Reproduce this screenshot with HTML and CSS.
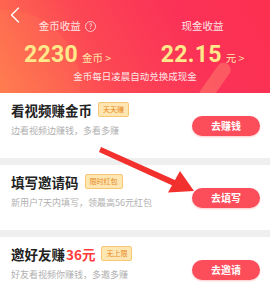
FILE: index.html
```html
<!DOCTYPE html>
<html lang="zh-CN">
<head>
  <meta charset="UTF-8">
  <meta name="viewport" content="width=device-width, initial-scale=1.0">
  <title>赚金币</title>
  <link rel="stylesheet" href="styles.css">
</head>
<body>
  <div class="page">
    <div class="header">
      <div class="deco deco-ring"></div>
      <div class="deco deco-pill"></div>
      <svg class="back" viewBox="0 0 10 16" width="10" height="16">
        <path d="M8.5 1 L1.5 8 L8.5 15" fill="none" stroke="#fff" stroke-width="1.4" stroke-linecap="round" stroke-linejoin="round"/>
      </svg>

      <div class="stats">
        <div class="stat">
          <div class="stat-label">金币收益 <span class="help">?</span></div>
          <div class="stat-value"><span class="num">2230</span><span class="unit">金币 &gt;</span></div>
        </div>
        <div class="stat">
          <div class="stat-label">现金收益</div>
          <div class="stat-value"><span class="num">22.15</span><span class="unit">元 &gt;</span></div>
        </div>
      </div>
      <p class="note">金币每日凌晨自动兑换成现金</p>
    </div>

    <div class="card">
      <div class="task">
        <div class="task-title">看视频赚金币<span class="tag">天天赚</span></div>
        <div class="task-desc">边看视频边赚钱，多看多赚</div>
      </div>
      <a class="btn">去赚钱</a>
    </div>

    <div class="card">
      <div class="task">
        <div class="task-title">填写邀请码<span class="tag">限时红包</span></div>
        <div class="task-desc">新用户7天内填写，领最高56元红包</div>
      </div>
      <a class="btn">去填写</a>
    </div>

    <div class="card">
      <div class="task">
        <div class="task-title">邀好友赚<span class="hot">36元</span><span class="tag">无上限</span></div>
        <div class="task-desc">好友看视频你赚钱，多邀多赚</div>
      </div>
      <a class="btn">去邀请</a>
    </div>

    <svg class="pointer" viewBox="0 0 270 283" width="270" height="283">
      <path d="M101 147 L176 180.5 L173.5 186 L99 152 Z" fill="#f2302e"/>
      <polygon points="194,191 168,192.5 180,171" fill="#f2302e"/>
    </svg>
  </div>
</body>
</html>
```

FILE: styles.css
```css
body {
  margin: 0;
  padding: 0;
  background-color: #efefef;
  font-family: 'Noto Sans CJK SC', 'Noto Sans', sans-serif;
}

.page {
  width: 270px;
  height: 283px;
  position: relative;
  overflow: hidden;
}

.header {
  position: relative;
  height: 93px;
  box-sizing: border-box;
  padding-top: 18px;
  overflow: hidden;
  background: linear-gradient(62deg, #ff7a4d 0%, #fc4654 38%, #fb3157 70%, #fc3150 100%);
  color: #fff;
}

.deco {
  position: absolute;
  pointer-events: none;
}
.deco-ring {
  width: 150px;
  height: 150px;
  border-radius: 50%;
  left: -70px;
  top: 10px;
  background: rgba(255, 150, 90, 0.14);
}
.deco-pill {
  width: 14px;
  height: 44px;
  border-radius: 7px;
  left: 208px;
  top: 60px;
  transform: rotate(35deg);
  background: rgba(255, 170, 120, 0.35);
}

.back {
  position: absolute;
  left: 10px;
  top: 7px;
}

.stats {
  position: relative;
  display: flex;
}

.stat {
  flex: 1;
  text-align: center;
}

.stat-label {
  font-size: 10.5px;
  line-height: 16px;
  color: #ffe6e6;
}

.help {
  display: inline-block;
  width: 9px;
  height: 9px;
  margin-left: 2px;
  border: 1px solid rgba(255, 230, 230, 0.8);
  border-radius: 50%;
  font-size: 7px;
  line-height: 9px;
  text-align: center;
  vertical-align: 1px;
}

.stat-value {
  margin-top: 7px;
  line-height: 28px;
  color: #ffe88a;
}

.num {
  font-family: 'Roboto', 'Noto Sans', sans-serif;
  font-size: 23px;
  font-weight: 700;
  letter-spacing: 0.3px;
}

.unit {
  font-size: 10.5px;
  margin-left: 4px;
  color: #ffe9a8;
}

.note {
  position: relative;
  margin: -3px 0 0;
  text-align: center;
  font-size: 9.5px;
  line-height: 14px;
  color: #ffe6e6;
}

.card {
  display: flex;
  align-items: center;
  height: 65px;
  padding: 0 10px 0 11px;
  background-color: #fff;
}
.card + .card {
  margin-top: 7px;
}

.task {
  flex: 1;
  padding-bottom: 14px;
}

.task-title {
  display: flex;
  align-items: center;
  font-size: 13.5px;
  line-height: 18px;
  font-weight: 700;
  color: #222;
}

.hot {
  color: #ff3b3b;
  margin-left: 1px;
}

.tag {
  margin-left: 6px;
  padding: 0 4px;
  height: 13px;
  line-height: 13px;
  font-size: 7px;
  font-weight: 400;
  color: #e8871b;
  background-color: #fde6b2;
  border: 0.5px solid #f7c774;
  border-radius: 2px;
}

.task-desc {
  margin-top: 6px;
  font-size: 9px;
  line-height: 12px;
  color: #b0b0b0;
}

.btn {
  width: 68px;
  height: 20px;
  line-height: 20px;
  border-radius: 10px;
  text-align: center;
  font-size: 10px;
  font-weight: 700;
  color: #fff;
  background-color: #fb4d5a;
  box-shadow: 0 1px 2px rgba(250, 70, 80, 0.3);
}

.pointer {
  position: absolute;
  left: 0;
  top: 0;
  pointer-events: none;
}
```
